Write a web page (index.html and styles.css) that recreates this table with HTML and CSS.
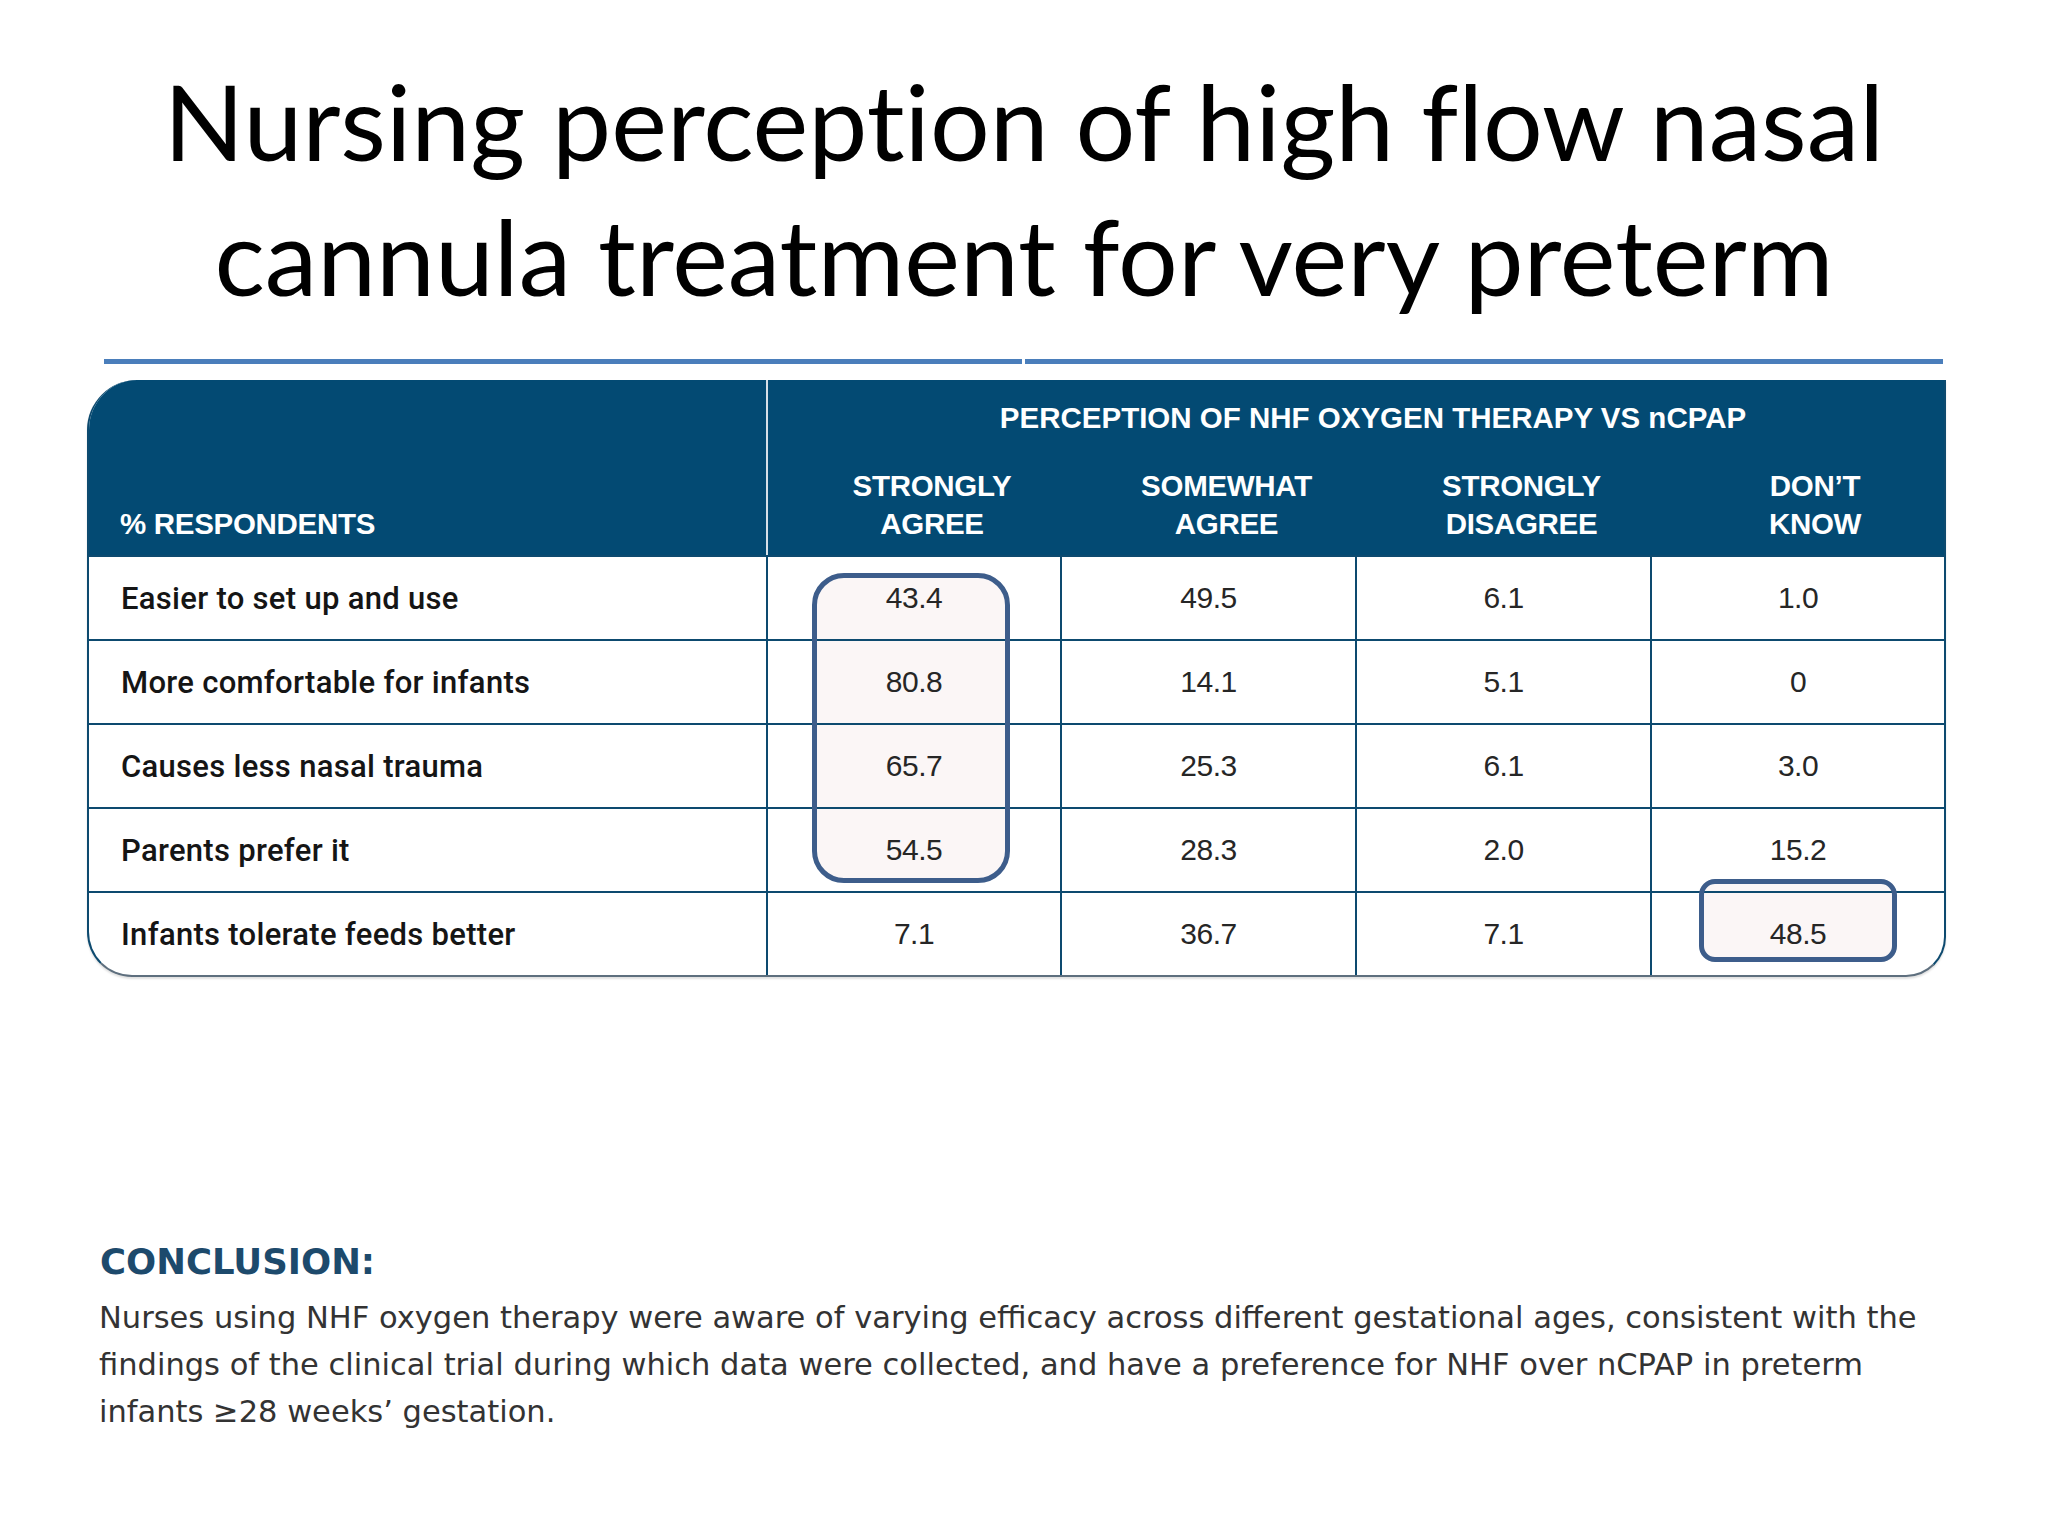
FILE: index.html
```html
<!DOCTYPE html>
<html lang="en">
<head>
<meta charset="utf-8">
<title>Nursing perception of high flow nasal cannula treatment</title>
<link rel="stylesheet" href="styles.css">
</head>
<body>
<div class="slide">
  <h1 class="title">Nursing perception of high flow nasal<br>cannula treatment for very preterm</h1>
  <div class="rule"><span class="seg"></span><span class="seg"></span></div>

  <div class="figure">
    <div class="tbl">
      <div class="hl-fill hl-a"></div>
      <div class="hl-fill hl-b"></div>
      <div class="head">
        <div class="head-label">% RESPONDENTS</div>
        <div class="head-right">
          <div class="head-title">PERCEPTION OF NHF OXYGEN THERAPY VS nCPAP</div>
          <div class="head-sub">STRONGLY<br>AGREE</div>
          <div class="head-sub">SOMEWHAT<br>AGREE</div>
          <div class="head-sub">STRONGLY<br>DISAGREE</div>
          <div class="head-sub">DON’T<br>KNOW</div>
        </div>
      </div>
      <div class="row">
        <div class="label">Easier to set up and use</div>
        <div class="val">43.4</div><div class="val">49.5</div><div class="val">6.1</div><div class="val">1.0</div>
      </div>
      <div class="row">
        <div class="label">More comfortable for infants</div>
        <div class="val">80.8</div><div class="val">14.1</div><div class="val">5.1</div><div class="val">0</div>
      </div>
      <div class="row">
        <div class="label">Causes less nasal trauma</div>
        <div class="val">65.7</div><div class="val">25.3</div><div class="val">6.1</div><div class="val">3.0</div>
      </div>
      <div class="row">
        <div class="label">Parents prefer it</div>
        <div class="val">54.5</div><div class="val">28.3</div><div class="val">2.0</div><div class="val">15.2</div>
      </div>
      <div class="row">
        <div class="label">Infants tolerate feeds better</div>
        <div class="val">7.1</div><div class="val">36.7</div><div class="val">7.1</div><div class="val">48.5</div>
      </div>
    </div>
    <div class="hl hl-a"></div>
    <div class="hl hl-b"></div>
  </div>

  <div class="conclusion">
    <h2 class="concl-head">CONCLUSION:</h2>
    <p class="concl-text">Nurses using NHF oxygen therapy were aware of varying efficacy across different gestational ages, consistent with the<br>findings of the clinical trial during which data were collected, and have a preference for NHF over nCPAP in preterm<br>infants ≥28 weeks’ gestation.</p>
  </div>
</div>
</body>
</html>
```

FILE: styles.css
```css
* { box-sizing: border-box; }

html, body {
  margin: 0;
  padding: 0;
  background: #ffffff;
}

.slide {
  width: 2048px;
  height: 1536px;
  overflow: hidden;
  background: #ffffff;
  padding-top: 53px;
}

.title {
  margin: 0;
  font-family: Lato, "Open Sans", sans-serif;
  font-weight: 400;
  font-size: 105.5px;
  line-height: 135px;
  color: #000000;
  text-align: center;
  font-variant-ligatures: none;
  font-feature-settings: "liga" 0, "clig" 0;
}

.rule {
  display: flex;
  gap: 3px;
  margin: 36px 0 0 104px;
  width: 1839px;
  height: 5px;
}

.rule .seg {
  flex: 1;
  background: #4a7ebb;
}

.figure {
  position: relative;
  margin: 16px 0 0 87px;
  width: 1859px;
}

.tbl {
  position: relative;
  width: 1859px;
  background: #ffffff;
  border: 2px solid #0d4a6f;
  border-top: 0;
  border-bottom-color: #5e6f7e;
  border-radius: 50px 0 40px 45px;
  overflow: hidden;
  box-shadow: 0 2px 2px rgba(0, 0, 0, 0.12);
  font-family: "Liberation Sans", Arial, sans-serif;
}

.head {
  position: relative;
  z-index: 1;
  display: grid;
  grid-template-columns: 679px 1fr;
  height: 175px;
  background: #034a73;
  color: #ffffff;
  font-weight: 700;
  font-size: 29.5px;
  line-height: 38px;
}

.head-label {
  display: flex;
  align-items: flex-end;
  padding: 0 0 12px 31px;
  border-right: 2px solid #d6dfe7;
  letter-spacing: -0.3px;
}

.head-right {
  display: grid;
  grid-template-columns: 294px 295px 295px 1fr;
  grid-template-rows: 76px 1fr;
  padding-bottom: 12px;
}

.head-title {
  grid-column: 1 / -1;
  display: flex;
  align-items: center;
  justify-content: center;
  padding: 0 0 0 34px;
}

.head-sub {
  display: flex;
  align-items: flex-end;
  justify-content: center;
  text-align: center;
  padding-left: 34px;
  letter-spacing: -0.3px;
}

.row {
  position: relative;
  z-index: 1;
  display: grid;
  grid-template-columns: 679px 294px 295px 295px 1fr;
  height: 84px;
  border-top: 2px solid #0d4a6f;
}

.row > div {
  display: flex;
  align-items: center;
  border-right: 2px solid #0d4a6f;
}

.row > div:last-child {
  border-right: 0;
}

.label {
  padding-left: 32px;
  font-family: Roboto, "Liberation Sans", sans-serif;
  font-weight: 500;
  font-size: 31px;
  letter-spacing: 0.3px;
  color: #151515;
}

.val {
  justify-content: center;
  font-size: 30px;
  color: #262626;
  letter-spacing: -0.5px;
}

.hl-fill {
  position: absolute;
  z-index: 0;
  background: #fbf6f6;
}

.hl {
  position: absolute;
  z-index: 2;
  border: 5px solid #3d5d8b;
}

.hl-fill.hl-a { left: 723px; top: 193px; width: 198px; height: 310px; border-radius: 32px; }
.hl-fill.hl-b { left: 1610px; top: 499px; width: 198px; height: 83px; border-radius: 16px; }

.hl.hl-a { left: 725px; top: 193px; width: 198px; height: 310px; border-radius: 32px; }
.hl.hl-b { left: 1612px; top: 499px; width: 198px; height: 83px; border-radius: 16px; }

.conclusion {
  margin: 263px 0 0 99px;
}

.concl-head {
  margin: 0 0 10px 1px;
  font-family: "DejaVu Sans", Verdana, sans-serif;
  font-weight: 700;
  font-size: 35.5px;
  line-height: 44px;
  color: #1d4a6c;
}

.concl-text {
  margin: 0;
  font-family: "DejaVu Sans", Verdana, sans-serif;
  font-size: 30.5px;
  line-height: 47px;
  color: #333333;
}
```
